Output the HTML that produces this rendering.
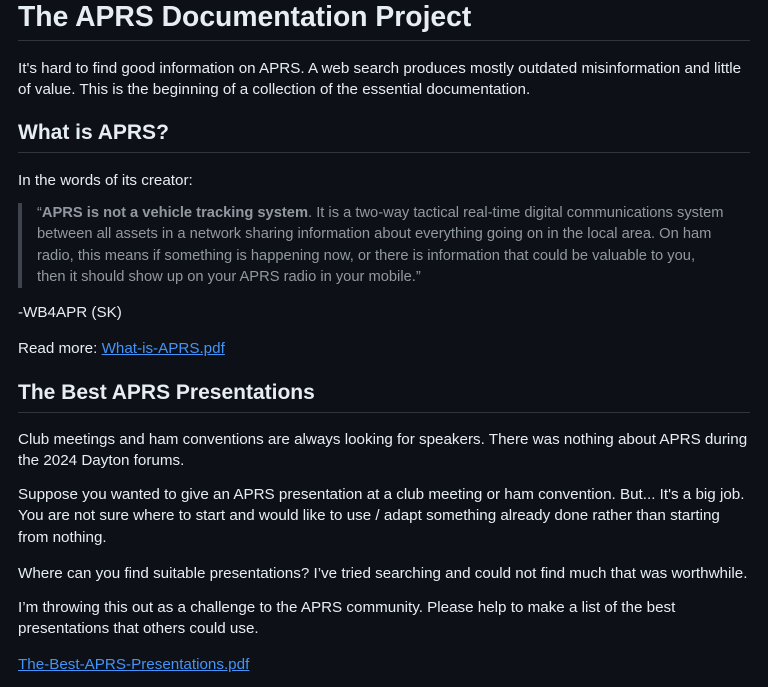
<!DOCTYPE html>
<html><head><style>
body{margin:0;background:#0d1117;width:768px;height:687px;overflow:hidden;font-family:"Liberation Sans",sans-serif;color:#e6edf3;font-size:15.2px;position:relative}
.b{position:absolute;left:18px;width:745px;line-height:21.3px;margin:0;white-space:nowrap}
h1,h2{font-weight:600;margin:0;position:absolute;left:18px;width:732px;border-bottom:1px solid #30363d}
h1{font-size:28.3px;top:0;height:40px;line-height:32px}
h2{font-size:21px;line-height:28px}
a{color:#4493f8;text-decoration:underline}
.q{color:#9198a1;left:18px;border-left:4px solid #3d444d;padding-left:15px;width:716px;font-size:14.7px}
.q b{color:#9198a1}
</style></head><body>
<h1>The APRS Documentation Project</h1>
<p class="b" style="top:58px">It's hard to find good information on APRS. A web search produces mostly outdated misinformation and little<br>of value. This is the beginning of a collection of the essential documentation.</p>
<h2 style="top:119px;height:33px">What is APRS?</h2>
<p class="b" style="top:170px">In the words of its creator:</p>
<p class="b q" style="top:203px">“<b>APRS is not a vehicle tracking system</b>. It is a two-way tactical real-time digital communications system<br>between all assets in a network sharing information about everything going on in the local area. On ham<br>radio, this means if something is happening now, or there is information that could be valuable to you,<br>then it should show up on your APRS radio in your mobile.”</p>
<p class="b" style="top:302px">-WB4APR (SK)</p>
<p class="b" style="top:338px">Read more: <a>What-is-APRS.pdf</a></p>
<h2 style="top:379px;height:33px">The Best APRS Presentations</h2>
<p class="b" style="top:429px">Club meetings and ham conventions are always looking for speakers. There was nothing about APRS during<br>the 2024 Dayton forums.</p>
<p class="b" style="top:484px">Suppose you wanted to give an APRS presentation at a club meeting or ham convention. But... It's a big job.<br>You are not sure where to start and would like to use / adapt something already done rather than starting<br>from nothing.</p>
<p class="b" style="top:563px">Where can you find suitable presentations? I’ve tried searching and could not find much that was worthwhile.</p>
<p class="b" style="top:597px">I’m throwing this out as a challenge to the APRS community. Please help to make a list of the best<br>presentations that others could use.</p>
<p class="b" style="top:654px"><a>The-Best-APRS-Presentations.pdf</a></p>
</body></html>
